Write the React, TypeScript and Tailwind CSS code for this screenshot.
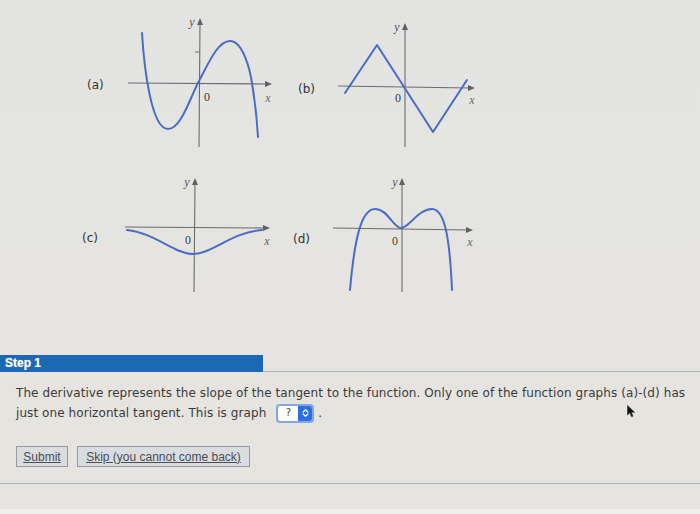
import React from "react";

type Pt = [number, number];

function Arrow({ x, y, dir }: { x: number; y: number; dir: "right" | "up" }) {
  const pts =
    dir === "right"
      ? `${x},${y} ${x - 7},${y - 3} ${x - 7},${y + 3}`
      : `${x},${y} ${x - 3},${y + 7} ${x + 3},${y + 7}`;
  return <polygon points={pts} fill="#5f6063" />;
}

function Graph({
  vb,
  w,
  h,
  xAxis,
  yAxis,
  yLab,
  zeroLab,
  xLab,
  curve,
  tick,
}: {
  vb: string;
  w: number;
  h: number;
  xAxis: [Pt, Pt];
  yAxis: [Pt, Pt];
  yLab: Pt;
  zeroLab: Pt;
  xLab: Pt;
  curve: string;
  tick?: [Pt, Pt];
}) {
  return (
    <svg width={w} height={h} viewBox={vb} className="shrink-0 block">
      <line x1={xAxis[0][0]} y1={xAxis[0][1]} x2={xAxis[1][0] - 5} y2={xAxis[1][1]} stroke="#6b6c6f" strokeWidth={1.1} />
      <Arrow x={xAxis[1][0]} y={xAxis[1][1]} dir="right" />
      <line x1={yAxis[0][0]} y1={yAxis[0][1]} x2={yAxis[1][0]} y2={yAxis[1][1] + 5} stroke="#6b6c6f" strokeWidth={1.1} />
      <Arrow x={yAxis[1][0]} y={yAxis[1][1]} dir="up" />
      {tick && (
        <line x1={tick[0][0]} y1={tick[0][1]} x2={tick[1][0]} y2={tick[1][1]} stroke="#6b6c6f" strokeWidth={1} />
      )}
      <path d={curve} fill="none" stroke="#4a6cc4" strokeWidth={2} strokeLinecap="round" strokeLinejoin="round" />
      <text x={yLab[0]} y={yLab[1]} textAnchor="middle" dominantBaseline="central" fontFamily="'Liberation Serif', serif" fontStyle="italic" fontSize={12} fill="#555">
        y
      </text>
      <text x={zeroLab[0]} y={zeroLab[1]} textAnchor="middle" dominantBaseline="central" fontFamily="'Liberation Serif', serif" fontSize={12} fill="#3a3a3a">
        0
      </text>
      <text x={xLab[0]} y={xLab[1]} textAnchor="middle" dominantBaseline="central" fontFamily="'Liberation Serif', serif" fontStyle="italic" fontSize={12} fill="#666">
        x
      </text>
    </svg>
  );
}

const labelCls = "shrink-0 text-[12px] leading-[16px] text-[#343434]";

export default function App() {
  return (
    <div
      className="relative w-[700px] h-[514px] overflow-hidden flex flex-col bg-linear-to-b from-[#e3e4e2] to-[#e7e4df]"
      style={{ fontFamily: "'DejaVu Sans', Verdana, sans-serif" }}
    >
      {/* Row 1 */}
      <div className="flex pt-[10px] h-[160px] shrink-0">
        <div className={`${labelCls} ml-[87px] mt-[67px] w-[38px]`}>(a)</div>
        <Graph
          vb="125 10 155 140"
          w={155}
          h={140}
          xAxis={[[128, 83], [272, 84]]}
          yAxis={[[199, 147], [200, 18]]}
          tick={[[195, 52], [199, 52]]}
          yLab={[192, 22]}
          zeroLab={[207, 97]}
          xLab={[268, 98]}
          curve="M142,33 C144,66 151,129 168,129 C181,129 190,98 198,83 C209,62 218,41 230,41 C243,41 250,70 252,83 C255,101 257,120 258,137"
        />
        <div className={`${labelCls} ml-[18px] mt-[71px] w-[37px]`}>(b)</div>
        <Graph
          vb="335 10 150 140"
          w={150}
          h={140}
          xAxis={[[338, 86], [475, 88]]}
          yAxis={[[405, 147], [405, 23]]}
          yLab={[397, 27]}
          zeroLab={[398, 98]}
          xLab={[472, 100]}
          curve="M345,93 L377,45 L433,132 L467,80"
        />
      </div>

      {/* Row 2 */}
      <div className="flex pt-[10px] h-[140px] shrink-0">
        <div className={`${labelCls} ml-[82px] mt-[60px] w-[38px]`}>(c)</div>
        <Graph
          vb="120 170 158 130"
          w={158}
          h={130}
          xAxis={[[125, 227], [270, 228]]}
          yAxis={[[194, 292], [195, 178]]}
          yLab={[187, 182]}
          zeroLab={[188, 240]}
          xLab={[267, 241]}
          curve="M127,230 C155,233 175,254 193,254 C212,254 232,232 262,230"
        />
        <div className={`${labelCls} ml-[15px] mt-[61px] w-[37px]`}>(d)</div>
        <Graph
          vb="330 170 150 130"
          w={150}
          h={130}
          xAxis={[[333, 228], [473, 230]]}
          yAxis={[[402, 292], [402, 178]]}
          yLab={[395, 182]}
          zeroLab={[395, 241]}
          xLab={[470, 242]}
          curve="M350,290 C354,245 360,209 375,209 C388,209 393,228 401,228 C409,228 418,209 432,209 C446,209 450,245 452,290"
        />
      </div>

      {/* Step header */}
      <div className="flex items-end mt-[55px] shrink-0">
        <div
          className="w-[263px] h-[17px] bg-[#1c68b2] text-white font-bold text-[12px] leading-[17px] pl-[5px]"
          style={{ fontFamily: "'Liberation Sans', Arial, sans-serif", textShadow: "0 0 1px rgba(255,255,255,0.6)" }}
        >
          Step 1
        </div>
        <div className="flex-1 border-b border-[#a6b3c0]" />
      </div>

      {/* Paragraph */}
      <div className="mt-[11px] pl-[16px] pr-[4px] text-[12px] leading-[20px] tracking-[0.08px] text-[#3b3b3b] shrink-0 whitespace-nowrap">
        <div>
          The derivative represents the slope of the tangent to the function. Only one of the function graphs (a)-(d) has
        </div>
        <div className="flex items-center">
          <span>just one horizontal tangent. This is graph</span>
          <span className="ml-[10px] inline-flex h-[19px] w-[38px] rounded-[4px] border-2 border-[#80a8e6] bg-white overflow-hidden">
            <span className="flex-1 flex items-center justify-center text-[10px] leading-none text-[#444]">?</span>
            <span className="w-[14px] bg-[#2c6fdf] flex items-center justify-center">
              <svg width="7" height="10" viewBox="0 0 7 10">
                <path d="M1.2,4 L3.5,1.6 L5.8,4" fill="none" stroke="white" strokeWidth="1.2" strokeLinecap="round" strokeLinejoin="round" />
                <path d="M1.2,6 L3.5,8.4 L5.8,6" fill="none" stroke="white" strokeWidth="1.2" strokeLinecap="round" strokeLinejoin="round" />
              </svg>
            </span>
          </span>
          <span className="ml-[4px]">.</span>
        </div>
      </div>

      {/* Buttons */}
      <div
        className="flex mt-[23px] pl-[16px] gap-[9px] shrink-0"
        style={{ fontFamily: "'Liberation Sans', Arial, sans-serif" }}
      >
        <div className="w-[52px] h-[21px] flex items-center justify-center bg-[#dadde0] border border-[#939aa1] text-[12px] text-[#4a4e54] underline">
          Submit
        </div>
        <div className="w-[173px] h-[21px] flex items-center justify-center bg-[#dadde0] border border-[#939aa1] text-[12px] text-[#4a4e54] underline">
          Skip (you cannot come back)
        </div>
      </div>

      <div className="mt-[16px] border-t border-[#a8b1ba] shrink-0" />
      <div className="flex-1" />
      <div className="h-[5px] bg-[#eeeeec] shrink-0" />

      {/* Mouse cursor */}
      <svg className="absolute left-[627px] top-[405px]" width="9" height="13" viewBox="0 0 9 13">
        <path d="M0.5,0.5 L0.5,10 L2.8,7.8 L4.5,11.8 L6,11.2 L4.4,7.3 L7.6,7.3 Z" fill="#111" stroke="#333" strokeWidth="0.6" />
      </svg>
    </div>
  );
}
